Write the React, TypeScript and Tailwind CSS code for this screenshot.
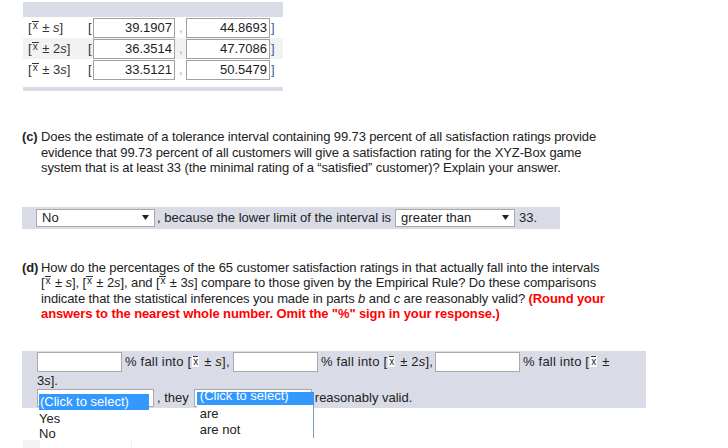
import React from "react";

function XBar({ boxed = false }: { boxed?: boolean }) {
  if (boxed) {
    return (
      <span className="inline-block bg-white px-[1px] align-[1px] h-[11px] mx-[1px]">
        <span className="block border-t border-[#333] text-[10px] leading-[9px]">x</span>
      </span>
    );
  }
  return (
    <span className="inline-block align-[3px]">
      <span className="block border-t border-[#333] text-[10px] leading-[8px] px-[1px]">x</span>
    </span>
  );
}

function Interval({ k, boxed = false }: { k: string; boxed?: boolean }) {
  return (
    <span className="whitespace-nowrap">
      [<XBar boxed={boxed} /> ± {k}
      <i>s</i>]
    </span>
  );
}

function Arrow() {
  return (
    <svg width="7" height="5" viewBox="0 0 7 5">
      <path d="M0 0H7L3.5 5Z" fill="#222" />
    </svg>
  );
}

const rows = [
  { k: "", a: "39.1907", b: "44.8693", bg: "" },
  { k: "2", a: "36.3514", b: "47.7086", bg: "bg-[#f2f2f2]" },
  { k: "3", a: "33.5121", b: "50.5479", bg: "" },
];

export default function App() {
  return (
    <div className="relative w-[728px] h-[448px] overflow-hidden bg-white text-[13px] leading-[15.5px] text-[#222] font-['Liberation_Sans',Arial,sans-serif]">
      {/* top table */}
      <div className="ml-[23px] mt-[2px] w-[260px]">
        <div className="h-[15px] bg-[#d9dce6]" />
        {rows.map((r, i) => (
          <div key={i} className={`flex items-center h-[21px] ${r.bg}`}>
            <span className="w-[65px] pl-[5px] text-[#333] whitespace-nowrap">
              [<XBar /> ± {r.k}
              <i>s</i>]
            </span>
            <span className="w-[5px] text-[#333]">[</span>
            <div className="w-[82px] h-[20px] bg-white border border-[#a0a0a0] text-right pr-[2px] leading-[18px]">
              {r.a}
            </div>
            <span className="w-[11px] pl-[4px] text-[#aaa]">,</span>
            <div className="w-[84px] h-[20px] bg-white border border-[#a0a0a0] text-right pr-[2px] leading-[18px]">
              {r.b}
            </div>
            <span className="pl-[1px] text-[#3b5a9a]">]</span>
          </div>
        ))}
        <div className="h-[7px]" />
        <div className="h-[4px] bg-[#d9dce6]" />
      </div>

      {/* (c) */}
      <div className="ml-[22px] mt-[38px] grid grid-cols-[19px_1fr] whitespace-nowrap tracking-[-0.12px]">
        <b>(c)</b>
        <div>
          Does the estimate of a tolerance interval containing 99.73 percent of all satisfaction ratings provide
          <br />
          evidence that 99.73 percent of all customers will give a satisfaction rating for the XYZ-Box game
          <br />
          system that is at least 33 (the minimal rating of a “satisfied” customer)? Explain your answer.
        </div>
      </div>

      <div className="ml-[22px] mt-[31px] w-[538px] h-[22px] bg-[#d9dce6] flex items-center pl-[14px] whitespace-nowrap">
        <div className="w-[119px] h-[18px] bg-white border border-[#a9a9a9] flex items-center justify-between pl-[5px] pr-[5px]">
          <span>No</span>
          <Arrow />
        </div>
        <span className="ml-[2px]">, because the lower limit of the interval is</span>
        <div className="ml-[4px] w-[120px] h-[18px] bg-white border border-[#a9a9a9] flex items-center justify-between pl-[5px] pr-[5px]">
          <span>greater than</span>
          <Arrow />
        </div>
        <span className="ml-[4px]">33.</span>
      </div>

      {/* (d) */}
      <div className="ml-[22px] mt-[31px] grid grid-cols-[19px_1fr] whitespace-nowrap tracking-[-0.1px]">
        <b>(d)</b>
        <div>
          How do the percentages of the 65 customer satisfaction ratings in that actually fall into the intervals
          <br />
          <Interval k="" />, <Interval k="2" />, and <Interval k="3" /> compare to those given by the Empirical Rule? Do these comparisons
          <br />
          indicate that the statistical inferences you made in parts <i>b</i> and <i>c</i> are reasonably valid?{" "}
          <b className="text-[#f00]">(Round your</b>
          <br />
          <b className="text-[#f00]">answers to the nearest whole number. Omit the "%" sign in your response.)</b>
        </div>
      </div>

      <div className="ml-[22px] mt-[29px] w-[624px] h-[57px] bg-[#d9dce6] pl-[15px] pt-[1px] whitespace-nowrap">
        <div className="flex items-center h-[20px]">
          <div className="w-[85px] h-[20px] bg-white border border-[#a9a9a9]" />
          <span className="ml-[3px] w-[105px] tracking-[0.2px]">
            % fall into <Interval k="" boxed />,
          </span>
          <div className="ml-[3px] w-[85px] h-[20px] bg-white border border-[#a9a9a9]" />
          <span className="ml-[3px] w-[111px] tracking-[0.2px]">
            % fall into <Interval k="2" boxed />,
          </span>
          <div className="ml-[3px] w-[85px] h-[20px] bg-white border border-[#a9a9a9]" />
          <span className="ml-[3px] tracking-[0.2px]">
            % fall into [<XBar boxed /> ±
          </span>
        </div>
        <div className="h-[15px] leading-[15px] mt-[1px]">
          3<i>s</i>].
        </div>
        <div className="flex items-center h-[18px] mt-[1px]">
          <div className="relative w-[117px] h-[18px] bg-white border border-[#a9a9a9]">
            <div className="absolute left-[1px] top-[4px] w-[110px] z-10">
              <div className="h-[16px] bg-[#3399ff] text-white leading-[16px] pl-[1px]">(Click to select)</div>
              <div className="bg-white h-[31px] pt-[1px]">
                <div className="h-[15px] leading-[15px]">Yes</div>
                <div className="h-[15px] leading-[15px]">No</div>
              </div>
            </div>
          </div>
          <span className="ml-[3px]">, they</span>
          <div className="relative ml-[5px] w-[118px] h-[18px] bg-white border border-[#a9a9a9]">
            <div className="absolute left-[2px] top-[2px] w-[117px] z-10">
              <div className="h-[13px] bg-[#3399ff] text-white overflow-hidden pl-[3px]">
                <div className="-mt-[4px] leading-[15px]">(Click to select)</div>
              </div>
              <div className="bg-white h-[33px] border-r border-[#7f9db9] pl-[3px] pt-[1px]">
                <div className="h-[16px] leading-[16px]">are</div>
                <div className="h-[16px] leading-[16px]">are not</div>
              </div>
            </div>
          </div>
          <span className="ml-[3px]">reasonably valid.</span>
        </div>
      </div>

      <div className="ml-[23px] mt-[32px] flex h-[8px]">
        <div className="w-[17px] h-[8px] bg-[#f4f4f4]" />
        <div className="ml-[91px] w-[1px] h-[8px] bg-[#eee]" />
      </div>
    </div>
  );
}
